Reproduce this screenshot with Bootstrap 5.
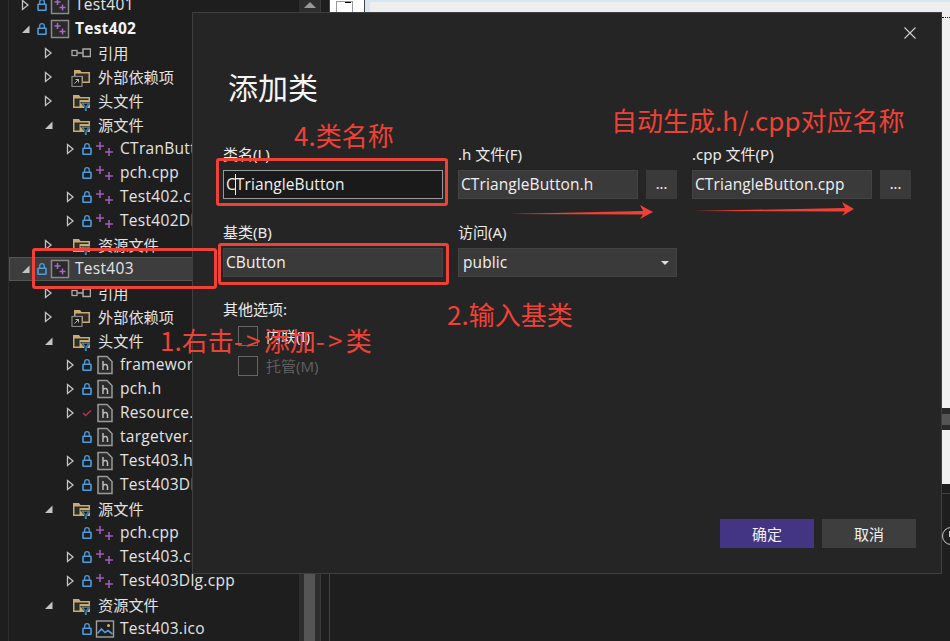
<!DOCTYPE html>
<html lang="zh">
<head>
<meta charset="utf-8">
<title>添加类</title>
<link href="https://cdn.jsdelivr.net/npm/bootstrap@5.3.0/dist/css/bootstrap.min.css" rel="stylesheet">
<style>
html,body{margin:0;height:641px;overflow:hidden;background:#1e1e1e;}
body{font-family:"Noto Sans CJK SC","Noto Sans",sans-serif;color:#f1f1f1;}
.stage{position:relative;width:950px;height:641px;overflow:hidden;background:#1e1e1e;}
.tree{position:absolute;left:9px;top:-7px;width:291px;}
.leftedge{position:absolute;left:8px;top:0;width:1px;height:641px;background:#2d2d2d;}
.trow{height:24px;display:flex;align-items:center;white-space:nowrap;position:relative;color:#e4e4e4;line-height:24px;}
.trow.cur{background:#3d3d3d;outline:1px solid #555;outline-offset:-1px;}
.trow b{font-weight:700;color:#f4f4f4;}
.tname{font-family:"Open Sans","Noto Sans CJK SC",sans-serif;font-size:15.5px;letter-spacing:.3px;margin-top:-2px;}
.tcn{font-family:"Noto Sans CJK SC",sans-serif;font-size:15.2px;margin-top:-2px;}
.slot{flex:none;display:flex;align-items:center;justify-content:center;}
.exp{width:14px;height:14px;}
.lk{width:14px;height:14px;margin-left:3px;}
.ic{width:20px;height:20px;margin:0 5px 0 1px;}
.d1{padding-left:9px;}.d2{padding-left:32px;}.d3{padding-left:54px;}
.d2 .ic{margin:0 7px 0 16px;}
.vs1{position:absolute;left:299px;top:0;width:22px;height:641px;background:#2e2e2e;}
.vs2{position:absolute;left:304px;top:14px;width:11px;height:627px;background:#555;}
.vsup{position:absolute;left:304px;top:2px;width:0;height:0;border-left:6px solid transparent;border-right:6px solid transparent;border-bottom:6px solid #999;}
.vs3{position:absolute;left:320px;top:0;width:1px;height:641px;background:#3a3a3a;}
.vs4{position:absolute;left:329px;top:0;width:1px;height:641px;background:#454545;}
.doc{position:absolute;left:330px;top:0;width:620px;height:484px;background:#f0f0f0;}
.docband{position:absolute;left:365px;top:0;width:585px;height:12px;background:#d8e5f3;}
.docwhite{position:absolute;left:370px;top:2px;width:580px;height:20px;background:#eee;}
.ruler{position:absolute;left:330px;top:0;width:34px;height:14px;background:#fff;}
.mk{position:absolute;left:336px;top:1px;width:17px;height:14px;background:#fff;border:1px solid #999;}
.mkb{position:absolute;left:345px;top:2px;width:6px;height:1px;background:#000;}
.docline{position:absolute;left:364px;top:0;width:1px;height:14px;background:#444;}
.dots{position:absolute;left:942px;top:17px;width:8px;border-top:1px dotted #00c;}
.band1{position:absolute;left:942px;top:408px;width:8px;height:22px;background:#2a2a2a;}
.band2{position:absolute;left:942px;top:414px;width:8px;height:11px;background:#555;}
.lower{position:absolute;left:330px;top:484px;width:620px;height:157px;background:#1e1e1e;}
.lowerline{position:absolute;left:942px;top:493px;width:8px;height:1px;background:#3f3f3f;}
.circ{position:absolute;left:942px;top:527px;width:18px;height:18px;border:1.5px solid #ccc;border-radius:50%;}
.circ i{position:absolute;left:6px;top:3px;width:3px;height:6px;background:#ccc;}
.dlg{position:absolute;left:192px;top:12px;width:750px;height:562px;background:#252525;border:1px solid #3f3f3f;}
.xbtn{position:absolute;left:710px;top:13px;width:14px;height:14px;}
.dlgtitle{font-size:30px;font-weight:400;line-height:44px;margin:51px 0 0 35px;color:#f5f5f5;height:44px;}
.grid1{display:grid;grid-template-columns:235px 234px 230px;margin:36px 0 0 30px;}
.lbl{font-size:15px;line-height:20px;height:20px;color:#ececec;white-space:nowrap;font-family:"Noto Sans","Noto Sans CJK SC",sans-serif;}
.fld{display:block;height:29px;margin-top:6px;background:#3a3a3a;border:1px solid #434343;color:#f1f1f1;font-size:15.5px;line-height:27px;padding:0 2px;white-space:nowrap;font-family:"Open Sans","Noto Sans CJK SC",sans-serif;letter-spacing:.1px;}
.fld.act{background:#1a1a1a;border-color:#9a9a9a;position:relative;}
.caret{position:absolute;left:11px;top:3px;width:1px;height:21px;background:#f0f0f0;}
.colname{width:220px;}
.colh{width:180px;}
.rowf{display:flex;gap:8px;align-items:flex-start;}
.dotbtn{width:31px;height:29px;margin-top:6px;background:#3a3a3a;color:#f1f1f1;font-size:14px;text-align:center;line-height:27px;}
.cell{height:78px;}
.selbox{width:219px;display:flex;justify-content:space-between;align-items:center;padding-left:4px;}
.tri{width:0;height:0;border-left:4px solid transparent;border-right:4px solid transparent;border-top:4px solid #ddd;margin-right:5px;}
.opts{margin:-1px 0 0 30px;}
.optr{display:flex;align-items:center;height:30px;margin-left:15px;}
.optfirst{margin-top:2px;}
.bx{width:20px;height:20px;border:1px solid #666;margin-right:8px;}
.optt{font-size:15px;color:#e8e8e8;font-family:"Noto Sans","Noto Sans CJK SC",sans-serif;}
.optt.dim{color:#5e5e5e;}
.foot{position:absolute;left:527px;top:506px;display:flex;gap:8px;}
.okb,.nob{width:94px;height:29px;border:0;border-radius:0;color:#f1f1f1;font-size:15px;padding:0;line-height:29px;font-family:"Noto Sans CJK SC",sans-serif;}
.okb,.okb:hover{background:#433583;color:#f1f1f1;}
.nob,.nob:hover{background:#3e3e3e;color:#f1f1f1;}
.redbox{position:absolute;border:3px solid #ef4136;border-radius:3px;}
.rb1{left:32px;top:248px;width:185px;height:41px;}
.rb2{left:216px;top:158px;width:232px;height:48px;}
.rb3{left:218px;top:243px;width:231px;height:42px;}
.note{position:absolute;color:#ef4136;white-space:nowrap;font-size:26px;font-family:"Noto Sans CJK SC",sans-serif;line-height:1.2;}
.n4{left:294px;top:119px;}
.nauto{left:611px;top:104px;}
.n2{left:447px;top:298px;}
.n1{left:160px;top:324px;}
.arw{letter-spacing:3.3px;}
.arrows{position:absolute;left:500px;top:195px;}
</style>
</head>
<body>
<svg width="0" height="0" class="position-absolute">
<defs>
<symbol id="cl" viewBox="0 0 14 14"><path d="M4.500 2.500l5.500 4.500-5.500 4.500z" fill="none" stroke="#c4c4c4" stroke-width="1.300"/></symbol>
<symbol id="op" viewBox="0 0 14 14"><path d="M11.500 3.500v7.500H4z" fill="#c4c4c4"/></symbol>
<symbol id="lock" viewBox="0 0 14 14"><path d="M4.700 6V4a2.300 2.300 0 0 1 4.600 0V6" fill="none" stroke="#4a9ede" stroke-width="1.300"/><rect x="3" y="6.200" width="8" height="6" rx=".4" fill="none" stroke="#4a9ede" stroke-width="1.600"/></symbol>
<symbol id="check" viewBox="0 0 14 14"><path d="M3 7l2.600 2.600L11 4.600" fill="none" stroke="#b5354a" stroke-width="1.400"/></symbol>
<symbol id="proj" viewBox="0 0 20 20"><rect x="1.500" y="1.500" width="17" height="17" fill="#2a2a2a" stroke="#8a8a8a" stroke-width="1.500"/><path d="M4.500 7h6M7.500 4v6M9.500 12.500h6M12.500 9.500v6" stroke="#a868c8" stroke-width="1.500"/></symbol>
<symbol id="ref" viewBox="0 0 20 20"><rect x="1" y="7.500" width="5" height="5" fill="none" stroke="#aaa" stroke-width="1.300"/><rect x="12" y="6" width="7.500" height="7.500" fill="none" stroke="#aaa" stroke-width="1.500"/><path d="M6 10h6" stroke="#aaa" stroke-width="1.500"/></symbol>
<symbol id="foldf" viewBox="0 0 20 20"><path d="M2 4h6l1.500 2H19v11H2z" fill="#c9ac72"/><path d="M3.500 7.500H17.500v1.500H8.500v6.500h-5z" fill="#2c2c2c"/><path d="M9.500 11.500h10.500l-4 4.500v4.500h-2.500V16z" fill="#3f8fd0" stroke="#1e1e1e" stroke-width=".6"/><path d="M12.500 12.800h4.500l-2 2.500v2.500h-.5v-2.500z" fill="#1e1e1e"/></symbol>
<symbol id="folde" viewBox="0 0 20 20"><path d="M3 3h6l1.500 2H19v11H3z" fill="#c9ac72"/><path d="M4.500 6.500H17.500v8H12V9H4.500z" fill="#2c2c2c"/><rect x="1" y="9.500" width="10" height="10" fill="#1e1e1e" stroke="#888" stroke-width="1.200"/><path d="M3.500 16.500l4-4M4.500 12.500h3v3" fill="none" stroke="#bbb" stroke-width="1"/></symbol>
<symbol id="cpp" viewBox="0 0 20 20"><path d="M1 7h8M5 3v8M10 13h8M14 9v8" stroke="#a05cb8" stroke-width="1.600"/></symbol>
<symbol id="hf" viewBox="0 0 20 20"><path d="M3 1.500h9l5 5v12H3z" fill="#2b2b2b" stroke="#9a9a9a" stroke-width="1.500"/><path d="M8 6v9M8 10.500c2-1.800 4.500-1 4.500 1V15" fill="none" stroke="#bbb" stroke-width="1.500"/></symbol>
<symbol id="pic" viewBox="0 0 20 20"><rect x="1.500" y="2" width="17" height="16" fill="none" stroke="#a0a0a0" stroke-width="1.400"/><circle cx="13.500" cy="6.500" r="1.500" fill="#e0b060"/><path d="M2.500 14.500l4-4.500 3.500 3.500 3-2 4.500 3.500" fill="none" stroke="#4a9ede" stroke-width="1.600"/></symbol>
</defs>
</svg>
<div class="stage">
  <div class="leftedge"></div>
  <div class="tree">
    <div class="trow d1"><svg class="slot exp"><use href="#cl"/></svg><svg class="slot lk"><use href="#lock"/></svg><svg class="slot ic"><use href="#proj"/></svg><span class="tname">Test401</span></div>
    <div class="trow d1"><svg class="slot exp"><use href="#op"/></svg><svg class="slot lk"><use href="#lock"/></svg><svg class="slot ic"><use href="#proj"/></svg><span class="tname"><b>Test402</b></span></div>
    <div class="trow d2"><svg class="slot exp"><use href="#cl"/></svg><svg class="slot ic"><use href="#ref"/></svg><span class="tcn">引用</span></div>
    <div class="trow d2"><svg class="slot exp"><use href="#cl"/></svg><svg class="slot ic"><use href="#folde"/></svg><span class="tcn">外部依赖项</span></div>
    <div class="trow d2"><svg class="slot exp"><use href="#cl"/></svg><svg class="slot ic"><use href="#foldf"/></svg><span class="tcn">头文件</span></div>
    <div class="trow d2"><svg class="slot exp"><use href="#op"/></svg><svg class="slot ic"><use href="#foldf"/></svg><span class="tcn">源文件</span></div>
    <div class="trow d3"><svg class="slot exp"><use href="#cl"/></svg><svg class="slot lk"><use href="#lock"/></svg><svg class="slot ic"><use href="#cpp"/></svg><span class="tname">CTranButton.cpp</span></div>
    <div class="trow d3"><span class="slot exp"></span><svg class="slot lk"><use href="#lock"/></svg><svg class="slot ic"><use href="#cpp"/></svg><span class="tname">pch.cpp</span></div>
    <div class="trow d3"><svg class="slot exp"><use href="#cl"/></svg><svg class="slot lk"><use href="#lock"/></svg><svg class="slot ic"><use href="#cpp"/></svg><span class="tname">Test402.cpp</span></div>
    <div class="trow d3"><svg class="slot exp"><use href="#cl"/></svg><svg class="slot lk"><use href="#lock"/></svg><svg class="slot ic"><use href="#cpp"/></svg><span class="tname">Test402Dlg.cpp</span></div>
    <div class="trow d2"><svg class="slot exp"><use href="#cl"/></svg><svg class="slot ic"><use href="#foldf"/></svg><span class="tcn">资源文件</span></div>
    <div class="trow d1 cur"><svg class="slot exp"><use href="#op"/></svg><svg class="slot lk"><use href="#lock"/></svg><svg class="slot ic"><use href="#proj"/></svg><span class="tname">Test403</span></div>
    <div class="trow d2"><svg class="slot exp"><use href="#cl"/></svg><svg class="slot ic"><use href="#ref"/></svg><span class="tcn">引用</span></div>
    <div class="trow d2"><svg class="slot exp"><use href="#cl"/></svg><svg class="slot ic"><use href="#folde"/></svg><span class="tcn">外部依赖项</span></div>
    <div class="trow d2"><svg class="slot exp"><use href="#op"/></svg><svg class="slot ic"><use href="#foldf"/></svg><span class="tcn">头文件</span></div>
    <div class="trow d3"><svg class="slot exp"><use href="#cl"/></svg><svg class="slot lk"><use href="#lock"/></svg><svg class="slot ic"><use href="#hf"/></svg><span class="tname">framework.h</span></div>
    <div class="trow d3"><svg class="slot exp"><use href="#cl"/></svg><svg class="slot lk"><use href="#lock"/></svg><svg class="slot ic"><use href="#hf"/></svg><span class="tname">pch.h</span></div>
    <div class="trow d3"><svg class="slot exp"><use href="#cl"/></svg><svg class="slot lk"><use href="#check"/></svg><svg class="slot ic"><use href="#hf"/></svg><span class="tname">Resource.h</span></div>
    <div class="trow d3"><span class="slot exp"></span><svg class="slot lk"><use href="#lock"/></svg><svg class="slot ic"><use href="#hf"/></svg><span class="tname">targetver.h</span></div>
    <div class="trow d3"><svg class="slot exp"><use href="#cl"/></svg><svg class="slot lk"><use href="#lock"/></svg><svg class="slot ic"><use href="#hf"/></svg><span class="tname">Test403.h</span></div>
    <div class="trow d3"><svg class="slot exp"><use href="#cl"/></svg><svg class="slot lk"><use href="#lock"/></svg><svg class="slot ic"><use href="#hf"/></svg><span class="tname">Test403Dlg.h</span></div>
    <div class="trow d2"><svg class="slot exp"><use href="#op"/></svg><svg class="slot ic"><use href="#foldf"/></svg><span class="tcn">源文件</span></div>
    <div class="trow d3"><span class="slot exp"></span><svg class="slot lk"><use href="#lock"/></svg><svg class="slot ic"><use href="#cpp"/></svg><span class="tname">pch.cpp</span></div>
    <div class="trow d3"><svg class="slot exp"><use href="#cl"/></svg><svg class="slot lk"><use href="#lock"/></svg><svg class="slot ic"><use href="#cpp"/></svg><span class="tname">Test403.cpp</span></div>
    <div class="trow d3"><svg class="slot exp"><use href="#cl"/></svg><svg class="slot lk"><use href="#lock"/></svg><svg class="slot ic"><use href="#cpp"/></svg><span class="tname">Test403Dlg.cpp</span></div>
    <div class="trow d2"><svg class="slot exp"><use href="#op"/></svg><svg class="slot ic"><use href="#foldf"/></svg><span class="tcn">资源文件</span></div>
    <div class="trow d3"><span class="slot exp"></span><svg class="slot lk"><use href="#lock"/></svg><svg class="slot ic"><use href="#pic"/></svg><span class="tname">Test403.ico</span></div>
  </div>
  <div class="vs1"></div><div class="vs2"></div><div class="vsup"></div><div class="vs3"></div><div class="vs4"></div>
  <div class="doc"></div><div class="ruler"></div><div class="mk"></div><div class="mkb"></div><div class="docline"></div><div class="docband"></div><div class="docwhite"></div>
  <div class="dots"></div><div class="band1"></div><div class="band2"></div><div class="lower"></div><div class="lowerline"></div><div class="circ"><i></i></div>

  <div class="dlg">
    <svg class="xbtn" viewBox="0 0 14 14"><path d="M1.500 1.500l11 11M12.500 1.500l-11 11" stroke="#cfcfcf" stroke-width="1.100"/></svg>
    <div class="dlgtitle">添加类</div>
    <div class="grid1">
      <div class="cell"><div class="lbl">类名(L)</div><div class="fld act colname"><span class="caret"></span>CTriangleButton</div></div>
      <div class="cell"><div class="lbl">.h 文件(F)</div><div class="rowf"><div class="fld colh">CTriangleButton.h</div><div class="dotbtn">...</div></div></div>
      <div class="cell"><div class="lbl">.cpp 文件(P)</div><div class="rowf"><div class="fld colh">CTriangleButton.cpp</div><div class="dotbtn">...</div></div></div>
      <div class="cell"><div class="lbl">基类(B)</div><div class="fld colname">CButton</div></div>
      <div class="cell"><div class="lbl">访问(A)</div><div class="fld selbox"><span>public</span><span class="tri"></span></div></div>
    </div>
    <div class="opts">
      <div class="lbl">其他选项:</div>
      <div class="optr optfirst"><span class="bx"></span><span class="optt">内联(I)</span></div>
      <div class="optr"><span class="bx"></span><span class="optt dim">托管(M)</span></div>
    </div>
    <div class="foot"><button class="btn okb">确定</button><button class="btn nob">取消</button></div>
  </div>

  <div class="redbox rb1"></div>
  <div class="redbox rb2"></div>
  <div class="redbox rb3"></div>
  <div class="note n4">4.类名称</div>
  <div class="note nauto">自动生成.h/.cpp对应名称</div>
  <div class="note n2">2.输入基类</div>
  <div class="note n1">1.右击<span class="arw">-&gt;</span>添加<span class="arw">-&gt;</span>类</div>
  <svg class="arrows" width="360" height="30" viewBox="0 0 360 30"><path d="M8 19L143 16 140 10 153 17 140 24 143 19.500zM192 16L345 13 342 7 354 14 342 21 345 16.500z" fill="#ef4136"/></svg>
</div>
</body>
</html>
